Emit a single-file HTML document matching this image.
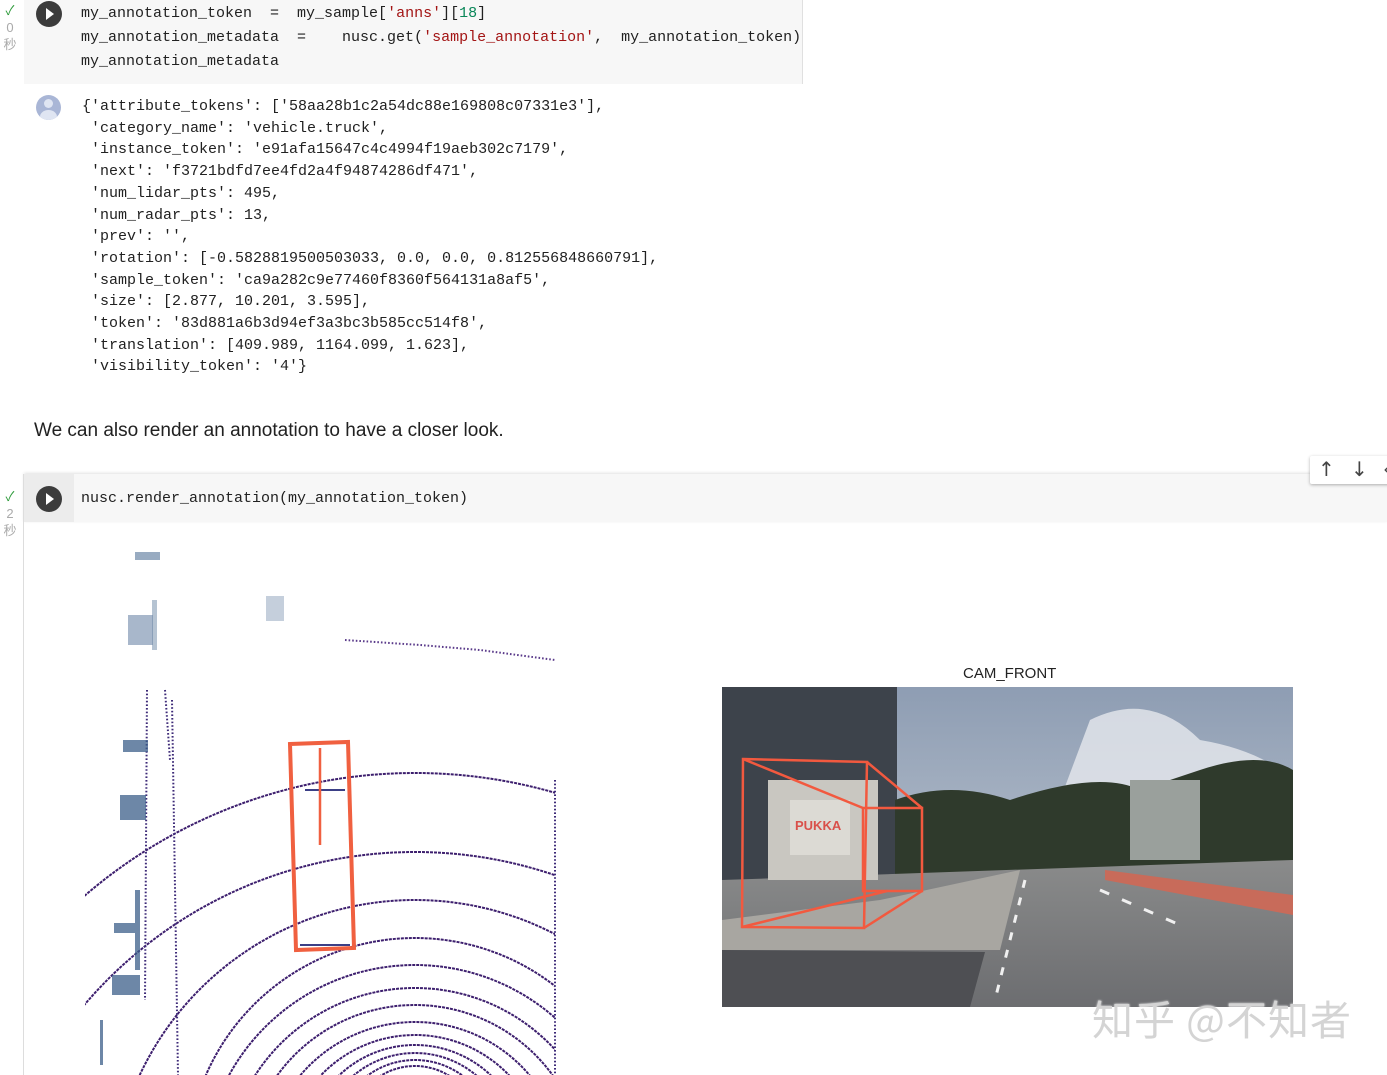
<!DOCTYPE html>
<html><head><meta charset="utf-8"><style>
html,body{margin:0;width:1387px;height:1075px;overflow:hidden}
body{background:#fff;position:relative;font-family:"Liberation Mono","Noto Sans CJK SC",monospace;}
.a{position:absolute}
.code{font-size:15px;color:#212121;line-height:24px;white-space:pre}
.s{color:#a31515}.n{color:#098658}
.play{width:26px;height:26px;border-radius:50%;background:#3c3c3c}
.play:after{content:"";position:absolute;left:10px;top:7px;border-left:8px solid #fff;border-top:6px solid transparent;border-bottom:6px solid transparent}
.out{font-size:15px;color:#212121;line-height:21.7px;white-space:pre}
.gut{font-family:"Liberation Sans","Noto Sans CJK SC",sans-serif;color:#aaa;font-size:13px;line-height:17px;text-align:center;width:20px}
</style></head><body>
<div class="a" style="left:24px;top:0;width:778px;height:84px;background:#f7f7f7;border-right:1px solid #e0e0e0"></div>
<div class="a gut" style="left:0;top:2px"><span style="color:#2e9b3b">✓</span><br>0<br>秒</div>
<div class="a play" style="left:36px;top:1px"></div>
<div class="a code" style="left:81px;top:2px">my_annotation_token  =  my_sample[<span class="s">'anns'</span>][<span class="n">18</span>]
my_annotation_metadata  =    nusc.get(<span class="s">'sample_annotation'</span>,  my_annotation_token)
my_annotation_metadata</div>
<div class="a" style="left:36px;top:95px;width:25px;height:25px;border-radius:50%;background:#a9b6d6;overflow:hidden"><div class="a" style="left:8px;top:4px;width:9px;height:9px;border-radius:50%;background:#dfe5f2"></div><div class="a" style="left:4px;top:15px;width:17px;height:14px;border-radius:50%;background:#dfe5f2"></div></div>
<div class="a out" style="left:82px;top:96px">{'attribute_tokens': ['58aa28b1c2a54dc88e169808c07331e3'],
 'category_name': 'vehicle.truck',
 'instance_token': 'e91afa15647c4c4994f19aeb302c7179',
 'next': 'f3721bdfd7ee4fd2a4f94874286df471',
 'num_lidar_pts': 495,
 'num_radar_pts': 13,
 'prev': '',
 'rotation': [-0.5828819500503033, 0.0, 0.0, 0.812556848660791],
 'sample_token': 'ca9a282c9e77460f8360f564131a8af5',
 'size': [2.877, 10.201, 3.595],
 'token': '83d881a6b3d94ef3a3bc3b585cc514f8',
 'translation': [409.989, 1164.099, 1.623],
 'visibility_token': '4'}</div>
<div class="a" style="left:34px;top:420px;font:19px 'Liberation Sans',sans-serif;color:#212121">We can also render an annotation to have a closer look.</div>
<div class="a" style="left:24px;top:474px;width:1363px;height:48px;background:#f7f7f7;box-shadow:0 -1px 3px rgba(0,0,0,.12)"></div>
<div class="a" style="left:24px;top:474px;width:50px;height:48px;background:#ececec"></div>
<div class="a" style="left:23px;top:474px;width:1px;height:601px;background:#ddd"></div>
<div class="a gut" style="left:0;top:488px"><span style="color:#2e9b3b">✓</span><br>2<br>秒</div>
<div class="a play" style="left:36px;top:486px"></div>
<div class="a code" style="left:81px;top:487px">nusc.render_annotation(my_annotation_token)</div>
<div class="a" style="left:1310px;top:456px;width:90px;height:28px;background:#fff;box-shadow:0 1px 3px rgba(0,0,0,.3);border-radius:2px;font:20px 'DejaVu Sans',sans-serif;color:#444"><span class="a" style="left:8px;top:1px">↑</span><span class="a" style="left:41px;top:1px">↓</span><span class="a" style="left:73px;top:1px">‹</span></div>
<div class="a" style="left:963px;top:665px;font:15px 'Liberation Sans',sans-serif;color:#222">CAM_FRONT</div>
<svg class="a" style="left:0;top:0" width="1387" height="1075">
<defs>
<clipPath id="lc"><rect x="85" y="540" width="470" height="535"/></clipPath>
<linearGradient id="sky" x1="0" y1="0" x2="0" y2="1"><stop offset="0" stop-color="#8e9db3"/><stop offset="1" stop-color="#c9d0d8"/></linearGradient>
<linearGradient id="rd" x1="0" y1="0" x2="0" y2="1"><stop offset="0" stop-color="#8a8b8b"/><stop offset="1" stop-color="#6c6d70"/></linearGradient>
</defs>
<g clip-path="url(#lc)" fill="none" stroke="#3d1f6e" stroke-width="2" stroke-dasharray="3 1">
<circle cx="415" cy="1279" r="506"/><circle cx="415" cy="1286" r="434"/><circle cx="415" cy="1204" r="304"/><circle cx="415" cy="1166" r="228"/><circle cx="415" cy="1177" r="212"/><circle cx="415" cy="1178" r="190"/><circle cx="415" cy="1175" r="170"/><circle cx="415" cy="1172" r="150"/><circle cx="415" cy="1165" r="130"/><circle cx="415" cy="1155" r="110"/><circle cx="415" cy="1148" r="95"/><circle cx="415" cy="1140" r="80"/><circle cx="415" cy="1131" r="65"/>
</g>
<g fill="none" stroke-dasharray="1.6 2" stroke-width="2">
<path d="M345 640 L420 645 L480 650 L555 660" stroke="#5a3a8a"/>
<path d="M147 690 L145 1000 M172 700 L178 1075 M165 690 L170 760 M555 780 L555 1075" stroke="#3d2a78"/>
</g>
<g fill="#3c5f8a" opacity=".75">
<rect x="123" y="740" width="25" height="12"/><rect x="120" y="795" width="26" height="25"/><rect x="114" y="923" width="26" height="10"/><rect x="112" y="975" width="28" height="20"/><rect x="135" y="890" width="5" height="80"/><rect x="100" y="1020" width="3" height="45"/><rect x="128" y="615" width="25" height="30" opacity=".6"/><rect x="135" y="552" width="25" height="8" opacity=".7"/><rect x="266" y="596" width="18" height="25" opacity=".4"/><rect x="152" y="600" width="5" height="50" opacity=".5"/>
</g>
<g stroke="#3b3f86" stroke-width="2" fill="none"><path d="M305 790 L345 790 M300 945 L350 945"/></g>
<path d="M320 748 L320 845" stroke="#f06040" stroke-width="2.5"/>
<polygon points="290,744 348,742 354,948 296,950" fill="none" stroke="#f06040" stroke-width="4"/>
<rect x="722" y="687" width="571" height="320" fill="url(#sky)"/>
<path d="M1090 720 Q1150 690 1200 740 Q1260 750 1293 780 L1293 800 L1060 800 Z" fill="#e6e9ee" opacity=".8"/>
<rect x="722" y="687" width="175" height="200" fill="#3d434b"/>
<path d="M895 800 Q950 780 1010 800 Q1100 770 1140 790 L1200 770 Q1260 750 1293 770 L1293 880 L895 880 Z" fill="#2f3a2c"/>
<rect x="1130" y="780" width="70" height="80" fill="#9aa09c"/>
<path d="M722 880 L1293 860 L1293 1007 L722 1007 Z" fill="url(#rd)"/>
<path d="M722 920 L880 900 L1020 870 L1000 950 L722 950 Z" fill="#a8a6a1"/>
<path d="M722 950 L985 952 L970 1007 L722 1007 Z" fill="#4e4f53"/>
<path d="M1105 870 L1293 895 L1293 915 L1105 880 Z" fill="#c86b5a"/>
<rect x="768" y="780" width="110" height="100" fill="#c9c7c1"/>
<rect x="790" y="800" width="60" height="55" fill="#dcdad4"/>
<text x="795" y="830" fill="#d9504a" font-family="Liberation Sans" font-weight="bold" font-size="13">PUKKA</text>
<g stroke="#f0f0f0" stroke-width="3"><path d="M1025 880 L995 1000" stroke-dasharray="8 10"/><path d="M1100 890 L1180 925" stroke-dasharray="10 14"/></g>
<g fill="none" stroke="#f2593f" stroke-width="2.5">
<polygon points="743,759 867,762 864,928 742,927"/>
<polygon points="863,808 922,808 922,891 863,891"/>
<path d="M867 762 L922 808 M864 928 L922 891 M742 927 L887 891 M743 759 L863 808"/>
</g>
</svg>
<div class="a" style="left:1092px;top:992px;font:41px 'Noto Sans CJK SC',sans-serif;line-height:50px;color:#d4d4d4;text-shadow:0 0 2px #fff;letter-spacing:1px">知乎 @不知者</div>
</body></html>
